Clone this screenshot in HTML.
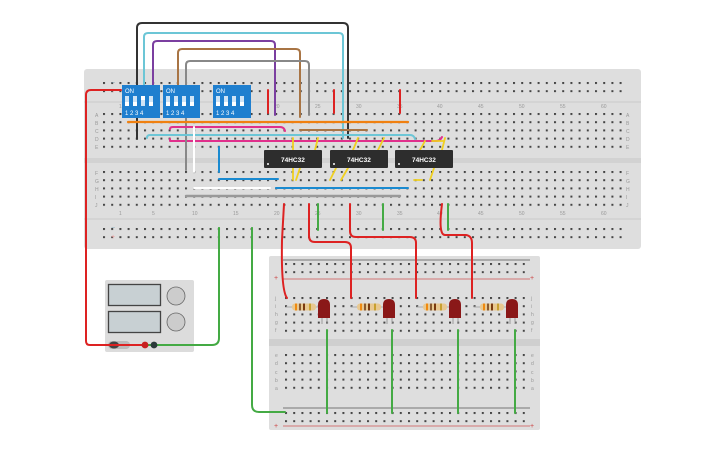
<!DOCTYPE html>
<html><head><style>html,body{margin:0;padding:0;background:#fff}svg{display:block}</style></head>
<body>
<svg width="725" height="453" viewBox="0 0 725 453" xmlns="http://www.w3.org/2000/svg" font-family="Liberation Sans, sans-serif">
<defs>
<pattern id="h" x="103" y="0" width="8.2" height="8.2" patternUnits="userSpaceOnUse"><rect x="0" y="0" width="2" height="2" fill="#444"/></pattern>
<pattern id="h2" x="285" y="0" width="8.2" height="8.2" patternUnits="userSpaceOnUse"><rect x="0" y="0" width="2" height="2" fill="#444"/></pattern>
</defs>
<rect x="84" y="69" width="557" height="180" rx="3" fill="#dedede"/>
<rect x="84" y="101" width="557" height="2" fill="#d4d4d4"/>
<rect x="84" y="158" width="557" height="5" fill="#d2d2d2"/>
<rect x="84" y="218" width="557" height="2" fill="#d4d4d4"/>
<g>
<rect x="103" y="0" width="520" height="10.4" fill="url(#h)" transform="translate(0,82)"/>
<rect x="103" y="0" width="520" height="40" fill="url(#h)" transform="translate(0,113)"/>
<rect x="103" y="0" width="520" height="40" fill="url(#h)" transform="translate(0,171)"/>
<rect x="103" y="0" width="520" height="10.4" fill="url(#h)" transform="translate(0,228)"/>
</g>
<g font-size="5" fill="#999">
<text x="95" y="117">A</text><text x="95" y="125">B</text><text x="95" y="133">C</text><text x="95" y="141">D</text><text x="95" y="149">E</text>
<text x="95" y="175">F</text><text x="95" y="183">G</text><text x="95" y="191">H</text><text x="95" y="199">I</text><text x="95" y="207">J</text>
<text x="626" y="117">A</text><text x="626" y="125">B</text><text x="626" y="133">C</text><text x="626" y="141">D</text><text x="626" y="149">E</text>
<text x="626" y="175">F</text><text x="626" y="183">G</text><text x="626" y="191">H</text><text x="626" y="199">I</text><text x="626" y="207">J</text>
<text x="119" y="108">1</text><text x="152" y="108">5</text><text x="192" y="108">10</text><text x="233" y="108">15</text><text x="274" y="108">20</text><text x="315" y="108">25</text><text x="356" y="108">30</text><text x="397" y="108">35</text><text x="437" y="108">40</text><text x="478" y="108">45</text><text x="519" y="108">50</text><text x="560" y="108">55</text><text x="601" y="108">60</text>
<text x="119" y="215">1</text><text x="152" y="215">5</text><text x="192" y="215">10</text><text x="233" y="215">15</text><text x="274" y="215">20</text><text x="315" y="215">25</text><text x="356" y="215">30</text><text x="397" y="215">35</text><text x="437" y="215">40</text><text x="478" y="215">45</text><text x="519" y="215">50</text><text x="560" y="215">55</text><text x="601" y="215">60</text>
</g>
<text x="111" y="85" font-size="7" fill="#8ab">−</text><text x="111" y="93" font-size="7" fill="#e99">+</text>
<text x="111" y="230" font-size="7" fill="#8ab">−</text><text x="111" y="239" font-size="7" fill="#e99">+</text>

<rect x="269" y="256" width="271" height="174" rx="2" fill="#dedede"/>
<rect x="269" y="339" width="271" height="7" fill="#cfcfcf"/>
<line x1="283" y1="260" x2="530" y2="260" stroke="#555" stroke-width="0.8"/>
<line x1="283" y1="279" x2="530" y2="279" stroke="#c55" stroke-width="0.8"/>
<line x1="283" y1="408" x2="530" y2="408" stroke="#555" stroke-width="0.8"/>
<line x1="283" y1="426" x2="530" y2="426" stroke="#c55" stroke-width="0.8"/>
<rect x="285" y="0" width="240" height="10.4" fill="url(#h2)" transform="translate(0,263)"/>
<rect x="285" y="0" width="240" height="40" fill="url(#h2)" transform="translate(0,297)"/>
<rect x="285" y="0" width="240" height="40" fill="url(#h2)" transform="translate(0,354)"/>
<rect x="285" y="0" width="240" height="10.4" fill="url(#h2)" transform="translate(0,412)"/>
<g font-size="5" fill="#999">
<text x="275" y="300">j</text><text x="275" y="308">i</text><text x="275" y="316">h</text><text x="275" y="324">g</text><text x="275" y="332">f</text>
<text x="275" y="357">e</text><text x="275" y="365">d</text><text x="275" y="374">c</text><text x="275" y="382">b</text><text x="275" y="390">a</text>
<text x="531" y="300">j</text><text x="531" y="308">i</text><text x="531" y="316">h</text><text x="531" y="324">g</text><text x="531" y="332">f</text>
<text x="531" y="357">e</text><text x="531" y="365">d</text><text x="531" y="374">c</text><text x="531" y="382">b</text><text x="531" y="390">a</text>
</g>
<text x="274" y="280" font-size="7" fill="#c44">+</text><text x="530" y="280" font-size="7" fill="#c44">+</text>
<text x="274" y="428" font-size="7" fill="#c44">+</text><text x="530" y="428" font-size="7" fill="#c44">+</text>

<rect x="105" y="280" width="89" height="72" rx="2" fill="#dcdcdc"/>
<rect x="108.5" y="284.5" width="52" height="21" fill="#c8d0d3" stroke="#444" stroke-width="1.3"/>
<rect x="108.5" y="311.5" width="52" height="21" fill="#c8d0d3" stroke="#444" stroke-width="1.3"/>
<circle cx="176" cy="296" r="9" fill="#ccc" stroke="#666" stroke-width="0.8"/>
<circle cx="176" cy="322" r="9" fill="#ccc" stroke="#666" stroke-width="0.8"/>
<rect x="108" y="341" width="22" height="8" rx="4" fill="#bbb"/>
<ellipse cx="114" cy="345" rx="5" ry="3.5" fill="#444"/>

<g fill="none" stroke-linecap="round" stroke-linejoin="round" stroke-width="2">
<path d="M145 345 H90 Q86 345 86 341 V95 Q86 90 91 90 H121" stroke="#dd2222"/>
<path d="M154 345 H212 Q219 345 219 338 V228" stroke="#44aa44"/>
<path d="M252 228 V405 Q252 412 259 412 H285" stroke="#44aa44"/>
<path d="M137 139 V28 Q137 23 142 23 H343 Q348 23 348 28 V138" stroke="#333"/>
<path d="M144 112 V37 Q144 33 148 33 H339 Q343 33 343 37 V138" stroke="#6cc6d6"/>
<path d="M153 115 V45 Q153 41 157 41 H271 Q275 41 275 45 V115" stroke="#7b3fa0"/>
<path d="M178 117 V53 Q178 49 182 49 H296 Q300 49 300 53 V117" stroke="#a87444"/>
<path d="M186 139 V65 Q186 61 190 61 H305 Q309 61 309 65 V115" stroke="#888"/>
<path d="M128 122 H408" stroke="#f08010" stroke-width="2.2"/>
<path d="M300 130 H367" stroke="#a87444"/>
<path d="M147 138 Q147 135 150 135 H410 Q414 135 415 139" stroke="#6cc6d6"/>
<path d="M170 129 Q170 127 173 127 H280 Q284 127 285 131" stroke="#e0308c"/>
<path d="M170 139 V141 H436 Q440 141 442 137" stroke="#e0308c"/>
<path d="M186 139 V170" stroke="#888"/>
<path d="M186 196 H400" stroke="#999" stroke-width="2.4"/>
<path d="M194 127 V172" stroke="#fff"/>
<path d="M194 188 H270" stroke="#fff"/>
<path d="M219 147 V172" stroke="#1a8ad0"/>
<path d="M219 179 H278" stroke="#1a8ad0"/>
<path d="M276 188 H408" stroke="#1a8ad0"/>
<path d="M268 90 V113 M334 90 V113 M400 90 V113" stroke="#dd2222"/>
<path d="M318 204 V230 M383 204 V230 M448 204 V230" stroke="#44aa44"/>
<path d="M219 228 V240 M252 228 V240" stroke="#44aa44"/>
<path d="M284 204 L282 240 Q281 290 287 298" stroke="#dd2222"/>
<path d="M309 204 V236 Q309 242 315 242 H345 Q351 242 351 248 V298" stroke="#dd2222"/>
<path d="M350 204 V231 Q350 237 356 237 H410 Q416 237 416 243 V298" stroke="#dd2222"/>
<path d="M442 204 Q438 235 445 235 H466 Q472 236 472 243 V298" stroke="#dd2222"/>
<path d="M327 330 V413 M392 330 V413 M458 330 V413 M515 330 V413" stroke="#44aa44"/>
<g stroke="#f0d020" stroke-width="1.8">
<path d="M293 138 V150 M318 138 L315 150 M358 138 L353 150 M384 138 L378 150 M425 141 L420 150 M432 141 L444 141 M445 138 L442 150"/>
<path d="M293 168 V180 M300 168 L296 180 M336 168 L330 180 M348 168 L341 180 M422 180 L414 180 M434 168 L430 180"/>
</g>
</g>
<path d="M147 345 H155" stroke="#44aa44" stroke-width="2"/>
<circle cx="145" cy="345" r="3.4" fill="#c82020"/><circle cx="154" cy="345" r="3.4" fill="#2a3a3a"/>

<g>
<rect x="264" y="150" width="58" height="18" rx="1" fill="#2d2d2d"/>
<rect x="330" y="150" width="58" height="18" rx="1" fill="#2d2d2d"/>
<rect x="395" y="150" width="58" height="18" rx="1" fill="#2d2d2d"/>
<g fill="#fff" font-size="6.5" font-weight="bold"><text x="281" y="162">74HC32</text><text x="347" y="162">74HC32</text><text x="412" y="162">74HC32</text></g>
<circle cx="268" cy="164" r="1" fill="#fff"/><circle cx="334" cy="164" r="1" fill="#fff"/><circle cx="399" cy="164" r="1" fill="#fff"/>
</g>

<g>
<rect x="122" y="85" width="38" height="33" fill="#1f7fcf"/>
<rect x="163" y="85" width="37" height="33" fill="#1f7fcf"/>
<rect x="213" y="85" width="38" height="33" fill="#1f7fcf"/>
<g fill="#fff" font-size="6"><text x="125" y="93">ON</text><text x="166" y="93">ON</text><text x="216" y="93">ON</text>
<text x="125" y="115">1 2 3 4</text><text x="166" y="115">1 2 3 4</text><text x="216" y="115">1 2 3 4</text></g>
<g fill="#cfe4f6">
<rect x="125" y="96" width="4" height="10"/><rect x="133" y="96" width="4" height="10"/><rect x="141" y="96" width="4" height="10"/><rect x="149" y="96" width="4" height="10"/>
<rect x="166" y="96" width="4" height="10"/><rect x="174" y="96" width="4" height="10"/><rect x="182" y="96" width="4" height="10"/><rect x="190" y="96" width="4" height="10"/>
<rect x="216" y="96" width="4" height="10"/><rect x="224" y="96" width="4" height="10"/><rect x="232" y="96" width="4" height="10"/><rect x="240" y="96" width="4" height="10"/>
</g>
<g fill="#fff">
<rect x="125" y="102" width="4" height="4"/><rect x="133" y="102" width="4" height="4"/><rect x="141" y="96" width="4" height="4"/><rect x="149" y="102" width="4" height="4"/>
<rect x="166" y="102" width="4" height="4"/><rect x="174" y="102" width="4" height="4"/><rect x="182" y="102" width="4" height="4"/><rect x="190" y="102" width="4" height="4"/>
<rect x="216" y="102" width="4" height="4"/><rect x="224" y="102" width="4" height="4"/><rect x="232" y="102" width="4" height="4"/><rect x="240" y="102" width="4" height="4"/>
</g>
</g>

<g>
<g id="r">
<line x1="286" y1="307" x2="320" y2="307" stroke="#aaa" stroke-width="1"/>
<rect x="292" y="303.5" width="24" height="7" rx="3" fill="#e8c890"/>
<rect x="295" y="303.5" width="2" height="7" fill="#f08a10"/><rect x="299" y="303.5" width="2" height="7" fill="#8a5a30"/><rect x="303" y="303.5" width="2" height="7" fill="#7a3a10"/><rect x="309" y="303.5" width="2" height="7" fill="#c8a030"/>
</g>
<use href="#r" x="65"/><use href="#r" x="131"/><use href="#r" x="188"/>
<g id="l">
<path d="M318 305 Q318 299 324 299 Q330 299 330 305 V318 H318 Z" fill="#8a1818"/>
<line x1="322" y1="318" x2="322" y2="324" stroke="#999"/><line x1="327" y1="318" x2="327" y2="324" stroke="#999"/>
</g>
<use href="#l" x="65"/><use href="#l" x="131"/><use href="#l" x="188"/>
</g>
</svg>
</body></html>
